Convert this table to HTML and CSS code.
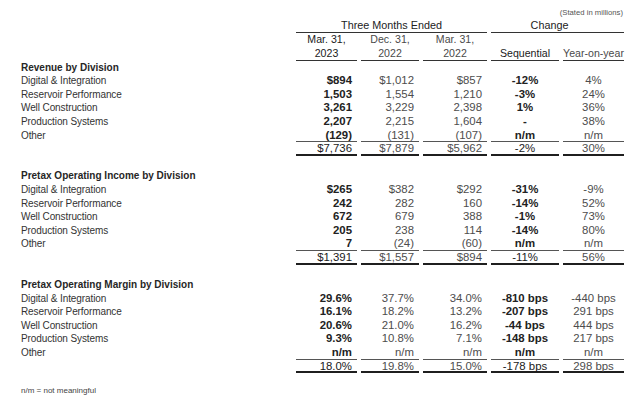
FILE: index.html
```html
<!DOCTYPE html>
<html lang="en">
<head>
<meta charset="utf-8">
<title>Division results</title>
<link rel="stylesheet" href="styles.css">
</head>
<body>
<div class="sheet">
  <div class="stated">(Stated in millions)</div>

  <div class="row hdr-top">
    <div></div>
    <div class="span3 rule">Three Months Ended</div>
    <div class="span2 rule change">Change</div>
  </div>
  <div class="row hdr">
    <div></div>
    <div class="c dark">Mar. 31,</div>
    <div class="c">Dec. 31,</div>
    <div class="c">Mar. 31,</div>
    <div></div>
    <div></div>
  </div>
  <div class="row hdr hdr-last">
    <div></div>
    <div class="c dark rule">2023</div>
    <div class="c rule">2022</div>
    <div class="c rule">2022</div>
    <div class="c dark rule">Sequential</div>
    <div class="c rule">Year-on-year</div>
  </div>

  <div class="row"><div class="label head">Revenue by Division</div></div>
  <div class="row"><div class="label">Digital &amp; Integration</div><div class="n b">$894</div><div class="n">$1,012</div><div class="n">$857</div><div class="m b">-12%</div><div class="m">4%</div></div>
  <div class="row"><div class="label">Reservoir Performance</div><div class="n b">1,503</div><div class="n">1,554</div><div class="n">1,210</div><div class="m b">-3%</div><div class="m">24%</div></div>
  <div class="row"><div class="label">Well Construction</div><div class="n b">3,261</div><div class="n">3,229</div><div class="n">2,398</div><div class="m b">1%</div><div class="m">36%</div></div>
  <div class="row"><div class="label">Production Systems</div><div class="n b">2,207</div><div class="n">2,215</div><div class="n">1,604</div><div class="m b">-</div><div class="m">38%</div></div>
  <div class="row sub"><div class="label">Other</div><div class="n b">(129)</div><div class="n">(131)</div><div class="n">(107)</div><div class="m b">n/m</div><div class="m">n/m</div></div>
  <div class="row total"><div></div><div class="n dk">$7,736</div><div class="n">$7,879</div><div class="n">$5,962</div><div class="m dk">-2%</div><div class="m">30%</div></div>

  <div class="row"></div>

  <div class="row"><div class="label head">Pretax Operating Income by Division</div></div>
  <div class="row"><div class="label">Digital &amp; Integration</div><div class="n b">$265</div><div class="n">$382</div><div class="n">$292</div><div class="m b">-31%</div><div class="m">-9%</div></div>
  <div class="row"><div class="label">Reservoir Performance</div><div class="n b">242</div><div class="n">282</div><div class="n">160</div><div class="m b">-14%</div><div class="m">52%</div></div>
  <div class="row"><div class="label">Well Construction</div><div class="n b">672</div><div class="n">679</div><div class="n">388</div><div class="m b">-1%</div><div class="m">73%</div></div>
  <div class="row"><div class="label">Production Systems</div><div class="n b">205</div><div class="n">238</div><div class="n">114</div><div class="m b">-14%</div><div class="m">80%</div></div>
  <div class="row sub"><div class="label">Other</div><div class="n b">7</div><div class="n">(24)</div><div class="n">(60)</div><div class="m b">n/m</div><div class="m">n/m</div></div>
  <div class="row total"><div></div><div class="n dk">$1,391</div><div class="n">$1,557</div><div class="n">$894</div><div class="m dk">-11%</div><div class="m">56%</div></div>

  <div class="row"></div>

  <div class="row"><div class="label head">Pretax Operating Margin by Division</div></div>
  <div class="row"><div class="label">Digital &amp; Integration</div><div class="n b">29.6%</div><div class="n">37.7%</div><div class="n">34.0%</div><div class="m b">-810 bps</div><div class="m">-440 bps</div></div>
  <div class="row"><div class="label">Reservoir Performance</div><div class="n b">16.1%</div><div class="n">18.2%</div><div class="n">13.2%</div><div class="m b">-207 bps</div><div class="m">291 bps</div></div>
  <div class="row"><div class="label">Well Construction</div><div class="n b">20.6%</div><div class="n">21.0%</div><div class="n">16.2%</div><div class="m b">-44 bps</div><div class="m">444 bps</div></div>
  <div class="row"><div class="label">Production Systems</div><div class="n b">9.3%</div><div class="n">10.8%</div><div class="n">7.1%</div><div class="m b">-148 bps</div><div class="m">217 bps</div></div>
  <div class="row sub"><div class="label">Other</div><div class="n b">n/m</div><div class="n">n/m</div><div class="n">n/m</div><div class="m b">n/m</div><div class="m">n/m</div></div>
  <div class="row total"><div></div><div class="n dk">18.0%</div><div class="n">19.8%</div><div class="n">15.0%</div><div class="m dk">-178 bps</div><div class="m">298 bps</div></div>

  <div class="note">n/m = not meaningful</div>
</div>
</body>
</html>
```

FILE: styles.css
```css
html, body {
  margin: 0;
  padding: 0;
  background: #ffffff;
}

.sheet {
  width: 640px;
  height: 406px;
  box-sizing: border-box;
  padding-left: 21px;
  font-family: "Liberation Sans", Arial, sans-serif;
  color: #333333;
  overflow: hidden;
}

.stated {
  width: 602px;
  height: 18px;
  box-sizing: border-box;
  padding-top: 8px;
  font-size: 7.7px;
  line-height: 9px;
  text-align: right;
  color: #555555;
}

.row {
  display: grid;
  grid-template-columns: 271px 61px 58px 64px 68px 61px;
  column-gap: 4px;
  height: 13.6px;
  line-height: 13.6px;
}

.hdr-top {
  height: 15px;
  line-height: 14px;
  font-size: 10.8px;
  color: #222222;
}

.span3 {
  grid-column: 2 / 5;
  text-align: center;
}

.span2 {
  grid-column: 5 / 7;
  text-align: center;
}

.change {
  padding-right: 16px;
}

.hdr {
  font-size: 10.6px;
  color: #4a4a4a;
  white-space: nowrap;
}

.hdr-last {
  height: 14px;
  line-height: 13.4px;
}

.c {
  text-align: center;
}

.dark {
  color: #1a1a1a;
}

.rule {
  box-shadow: inset 0 -1px 0 #333333;
}

.label {
  font-size: 10px;
  letter-spacing: -0.1px;
  color: #333333;
  white-space: nowrap;
}

.label.head {
  font-weight: bold;
  color: #262626;
  letter-spacing: 0;
}

.n, .m {
  font-size: 11.4px;
  color: #4d4d4d;
  white-space: nowrap;
}

.n {
  text-align: right;
  padding-right: 5px;
}

.m {
  text-align: center;
}

.b {
  font-weight: bold;
  color: #222222;
}

.dk {
  color: #1a1a1a;
}

.sub .n, .sub .m {
  box-shadow: inset 0 -1px 0 #555555;
}

.total .n, .total .m {
  box-shadow: inset 0 -2px 0 #1f1f1f;
}

.note {
  margin-top: 12px;
  font-size: 8px;
  line-height: 12px;
  color: #444444;
}
```
